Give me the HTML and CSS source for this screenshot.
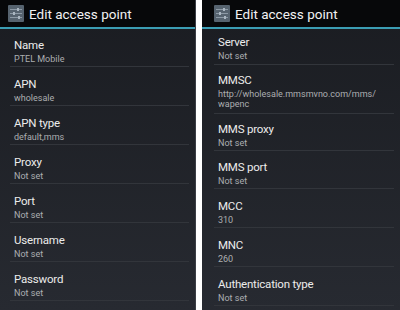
FILE: index.html
```html
<!DOCTYPE html>
<html>
<head>
<meta charset="utf-8">
<link rel="stylesheet" href="styles.css">
</head>
<body>
<div class="shots">
  <section class="phone left">
    <header class="bar">
      <svg class="icon" viewBox="0 0 16 17" width="16" height="17"><rect x="0" y="0" width="16" height="17" rx="1" fill="#56636f"/><rect x="2" y="4" width="12" height="1" fill="#8d9aa6"/><rect x="2" y="8" width="12" height="1" fill="#8d9aa6"/><rect x="2" y="12" width="12" height="1" fill="#8d9aa6"/><rect x="9" y="3" width="2" height="3" fill="#aab6c1"/><rect x="5" y="7" width="2" height="3" fill="#aab6c1"/><rect x="10" y="11" width="2" height="3" fill="#aab6c1"/></svg>
      <span class="title">Edit access point</span>
    </header>
    <div class="list">
      <div class="row first"><div class="label">Name</div><div class="value">PTEL Mobile</div></div>
      <div class="row"><div class="label">APN</div><div class="value">wholesale</div></div>
      <div class="row"><div class="label">APN type</div><div class="value">default,mms</div></div>
      <div class="row"><div class="label">Proxy</div><div class="value">Not set</div></div>
      <div class="row"><div class="label">Port</div><div class="value">Not set</div></div>
      <div class="row"><div class="label">Username</div><div class="value">Not set</div></div>
      <div class="row"><div class="label">Password</div><div class="value">Not set</div></div>
    </div>
  </section>
  <section class="phone right">
    <header class="bar">
      <svg class="icon" viewBox="0 0 16 17" width="16" height="17"><rect x="0" y="0" width="16" height="17" rx="1" fill="#56636f"/><rect x="2" y="4" width="12" height="1" fill="#8d9aa6"/><rect x="2" y="8" width="12" height="1" fill="#8d9aa6"/><rect x="2" y="12" width="12" height="1" fill="#8d9aa6"/><rect x="9" y="3" width="2" height="3" fill="#aab6c1"/><rect x="5" y="7" width="2" height="3" fill="#aab6c1"/><rect x="10" y="11" width="2" height="3" fill="#aab6c1"/></svg>
      <span class="title">Edit access point</span>
    </header>
    <div class="list">
      <div class="row r-server"><div class="label">Server</div><div class="value">Not set</div></div>
      <div class="row r-mmsc"><div class="label">MMSC</div><div class="value">http://wholesale.mmsmvno.com/mms/<br>wapenc</div></div>
      <div class="row r-short"><div class="label">MMS proxy</div><div class="value">Not set</div></div>
      <div class="row r-mid"><div class="label">MMS port</div><div class="value">Not set</div></div>
      <div class="row"><div class="label">MCC</div><div class="value">310</div></div>
      <div class="row"><div class="label">MNC</div><div class="value">260</div></div>
      <div class="row"><div class="label">Authentication type</div><div class="value">Not set</div></div>
    </div>
  </section>
</div>
</body>
</html>
```
FILE: styles.css
```css
html, body {
  margin: 0;
  padding: 0;
  background: #ffffff;
}
body {
  width: 400px;
  height: 310px;
  overflow: hidden;
  font-family: Roboto, "Noto Sans", "Liberation Sans", sans-serif;
}
.shots {
  display: flex;
  gap: 6px;
  height: 310px;
}
.phone {
  display: flex;
  flex-direction: column;
  background: linear-gradient(#1a1c21, #272a31);
  overflow: hidden;
}
.phone.left {
  width: 196px;
  border-right: 1px solid #3b3e45;
  box-sizing: border-box;
}
.phone.right {
  width: 198px;
}
.bar {
  height: 27px;
  flex: none;
  display: flex;
  align-items: center;
  gap: 5px;
  background: #07080a;
  border-bottom: 2px solid #3b9db3;
  box-sizing: content-box;
}
.left .bar { padding-left: 8px; }
.right .bar { padding-left: 12px; }
.icon { flex: none; }
.title {
  color: #f2f2f2;
  font-size: 13.5px;
}
.list {
  display: flex;
  flex-direction: column;
}
.left .list { padding: 0 6px 0 10px; }
.right .list { padding: 0 6px 0 12px; }
.row {
  height: 39px;
  flex: none;
  box-sizing: border-box;
  border-bottom: 1px solid #32353b;
  padding: 10px 0 0 4px;
}
.row.first { height: 38px; padding-top: 9px; }
.row.r-server { height: 36px; padding-top: 6px; }
.row.r-mmsc { height: 49px; padding-top: 8px; }
.row.r-short { height: 37px; padding-top: 8px; }
.row.r-mid { height: 38px; padding-top: 9px; }
.label {
  color: #ececec;
  font-size: 11.5px;
  letter-spacing: -0.2px;
  line-height: 14px;
}
.value {
  color: #acaeb1;
  font-size: 9px;
  line-height: 10px;
  margin-top: 2px;
}
```
